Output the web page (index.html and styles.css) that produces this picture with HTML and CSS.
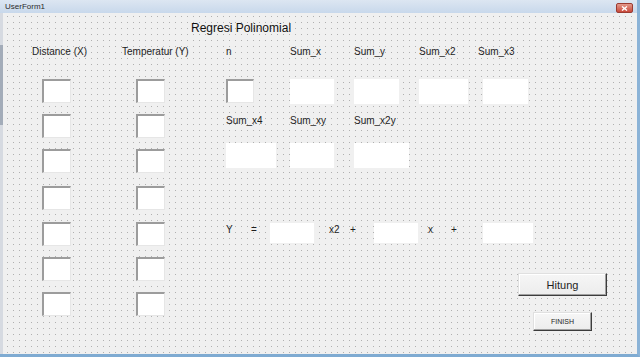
FILE: index.html
```html
<!DOCTYPE html>
<html lang="id">
<head>
    <meta charset="UTF-8">
    <meta name="viewport" content="width=device-width, initial-scale=1.0">
    <title>UserForm1</title>
    <link rel="stylesheet" href="styles.css">
</head>
<body>
<div class="window">
    <div class="titlebar">
        <span class="caption">UserForm1</span>
        <span class="close">
            <svg width="7" height="5" viewBox="0 0 7 5"><path d="M1 0.5 L6 4.5 M6 0.5 L1 4.5" stroke="#fff" stroke-width="1.4"/></svg>
        </span>
    </div>
    <div class="frame">
        <div class="edge"></div>
        <div class="client">
            <div class="heading">Regresi Polinomial</div>
            <div class="form">
                <div class="col col-x">
                    <div class="col-label">Distance (X)</div>
                    <div class="col-boxes">
                        <input type="text" class="tb sunken cell">
                        <input type="text" class="tb sunken cell">
                        <input type="text" class="tb sunken cell">
                        <input type="text" class="tb sunken cell">
                        <input type="text" class="tb sunken cell">
                        <input type="text" class="tb sunken cell">
                        <input type="text" class="tb sunken cell">
                    </div>
                </div>
                <div class="col col-y">
                    <div class="col-label">Temperatur (Y)</div>
                    <div class="col-boxes">
                        <input type="text" class="tb sunken cell">
                        <input type="text" class="tb sunken cell">
                        <input type="text" class="tb sunken cell">
                        <input type="text" class="tb sunken cell">
                        <input type="text" class="tb sunken cell">
                        <input type="text" class="tb sunken cell">
                        <input type="text" class="tb sunken cell">
                    </div>
                </div>
                <div class="calc">
                    <div class="sums">
                        <div class="field top">
                            <label>n</label>
                            <input type="text" class="tb sunken w-n">
                        </div>
                        <div class="field top">
                            <label>Sum_x</label>
                            <input type="text" class="tb flat w-44">
                        </div>
                        <div class="field top">
                            <label>Sum_y</label>
                            <input type="text" class="tb flat w-45">
                        </div>
                        <div class="field top">
                            <label>Sum_x2</label>
                            <input type="text" class="tb flat w-49">
                        </div>
                        <div class="field top">
                            <label>Sum_x3</label>
                            <input type="text" class="tb flat w-45 shift">
                        </div>
                        <div class="field bottom">
                            <label>Sum_x4</label>
                            <input type="text" class="tb flat w-50">
                        </div>
                        <div class="field bottom">
                            <label>Sum_xy</label>
                            <input type="text" class="tb flat w-44">
                        </div>
                        <div class="field bottom">
                            <label>Sum_x2y</label>
                            <input type="text" class="tb flat w-55">
                        </div>
                    </div>

                    <div class="equation">
                        <span class="eq-text eq-y">Y</span>
                        <span class="eq-text eq-eq">=</span>
                        <input type="text" class="tb flat eq-box w-44">
                        <span class="eq-text eq-x2">x2</span>
                        <span class="eq-text eq-plus1">+</span>
                        <input type="text" class="tb flat eq-box w-44">
                        <span class="eq-text eq-x">x</span>
                        <span class="eq-text eq-plus2">+</span>
                        <input type="text" class="tb flat eq-box w-50">
                    </div>

                    <div class="actions">
                        <button class="btn btn-hitung">Hitung</button>
                        <button class="btn btn-finish">FINISH</button>
                    </div>
                </div>
            </div>
        </div>
    </div>
</div>
</body>
</html>
```

FILE: styles.css
```css
* {
    box-sizing: border-box;
}
body {
    margin: 0;
    width: 640px;
    height: 357px;
    overflow: hidden;
    font-family: "Liberation Sans", Arial, sans-serif;
    color: #1e1e1e;
    background-color: #f0f0f0;
}
.window {
    height: 357px;
    display: flex;
    flex-direction: column;
    border-right: 3px solid #8bb3d7;
    border-bottom: 3px solid #7fabd2;
}

/* title bar */
.titlebar {
    height: 13px;
    flex: none;
    display: flex;
    justify-content: space-between;
    align-items: flex-start;
    background: linear-gradient(#dce6f2, #c8d8eb);
}
.caption {
    padding-left: 5px;
    padding-top: 2px;
    font-size: 8px;
    line-height: 10px;
    color: #2b2b2b;
}
.close {
    width: 17px;
    height: 10px;
    margin-top: 3px;
    margin-right: 4px;
    display: flex;
    align-items: center;
    justify-content: center;
    background: linear-gradient(#e39a8c, #c9483a);
    border: 1px solid #9b3b31;
    border-radius: 2px;
}

/* form body */
.frame {
    flex: 1;
    display: flex;
}
.edge {
    width: 3px;
    flex: none;
    background: linear-gradient(to bottom, #d6dae1 32px, #a3acb9 32px, #a3acb9 112px, #d6dae1 112px);
}
.client {
    flex: 1;
    background-color: #f0f0f0;
    background-image:
        linear-gradient(90deg, #f0f0f0 5px, transparent 5px),
        linear-gradient(#f0f0f0 5px, #b0b0b0 5px);
    background-size: 6px 6px;
    background-position: 5px 4px;
}
.heading {
    margin: 8px 0 0 188px;
    font-size: 12px;
    line-height: 14px;
    color: #111;
}
.form {
    display: flex;
    margin-top: 11px;
}

/* text boxes */
.tb {
    display: block;
    margin: 0;
    padding: 0;
    outline: none;
    font: inherit;
    background: #fff;
}
.sunken {
    border-top: 2px solid #9c9c9c;
    border-left: 2px solid #9c9c9c;
    border-right: 1px solid #e6e6e6;
    border-bottom: 1px solid #e6e6e6;
}
.flat {
    border: none;
}
.cell {
    width: 29px;
    height: 24px;
}
.w-n {
    width: 28px;
    height: 24px;
}
.w-44 { width: 44px; }
.w-45 { width: 45px; }
.w-49 { width: 49px; }
.w-50 { width: 50px; }
.w-55 { width: 55px; }
.shift {
    margin-left: 5px;
}

/* data columns */
.col-x {
    width: 119px;
    padding-left: 29px;
}
.col-y {
    width: 104px;
}
.col-label {
    height: 12px;
    font-size: 10px;
    line-height: 12px;
    white-space: nowrap;
}
.col-boxes {
    display: flex;
    flex-direction: column;
    gap: 11px;
    margin-top: 21px;
}
.col-x .col-boxes {
    margin-left: 10px;
}
.col-y .col-boxes {
    margin-left: 14px;
}
.col-boxes .cell:nth-child(4) {
    margin-top: 2px;
}
.col-boxes .cell:nth-child(5) {
    margin-top: 1px;
}

/* sums */
.sums {
    display: grid;
    grid-template-columns: 64px 64px 65px 59px 60px;
    row-gap: 11px;
}
.field {
    display: flex;
    flex-direction: column;
    align-items: flex-start;
}
.field label {
    height: 12px;
    font-size: 10px;
    line-height: 12px;
    white-space: nowrap;
}
.field .flat {
    height: 25px;
}
.field.top .tb {
    margin-top: 21px;
}
.field.bottom .tb {
    margin-top: 16px;
}

/* equation */
.equation {
    display: flex;
    align-items: flex-start;
    margin-top: 55px;
    height: 20px;
}
.eq-text {
    font-size: 10px;
    line-height: 14px;
}
.eq-box {
    height: 20px;
}
.eq-y { width: 25px; }
.eq-eq { width: 19px; }
.eq-x2 { width: 21px; margin-left: 15px; }
.eq-plus1 { width: 24px; }
.eq-x { width: 23px; margin-left: 10px; }
.eq-plus2 { width: 32px; }

/* buttons */
.actions {
    display: flex;
    flex-direction: column;
    align-items: flex-start;
    margin-top: 30px;
}
.btn {
    padding: 0;
    font-family: inherit;
    color: #1e1e1e;
    background: linear-gradient(#f6f6f6, #ececec);
    border: 1px solid;
    border-color: #e0e0e0 #3c3c3c #3c3c3c #e0e0e0;
    box-shadow: inset -1px -1px 0 #a0a0a0, inset 1px 1px 0 #fff;
    border-radius: 0;
}
.btn-hitung {
    width: 89px;
    height: 23px;
    margin-left: 292px;
    font-size: 11px;
}
.btn-finish {
    width: 59px;
    height: 19px;
    margin-top: 16px;
    margin-left: 307px;
    font-size: 7px;
}
```
